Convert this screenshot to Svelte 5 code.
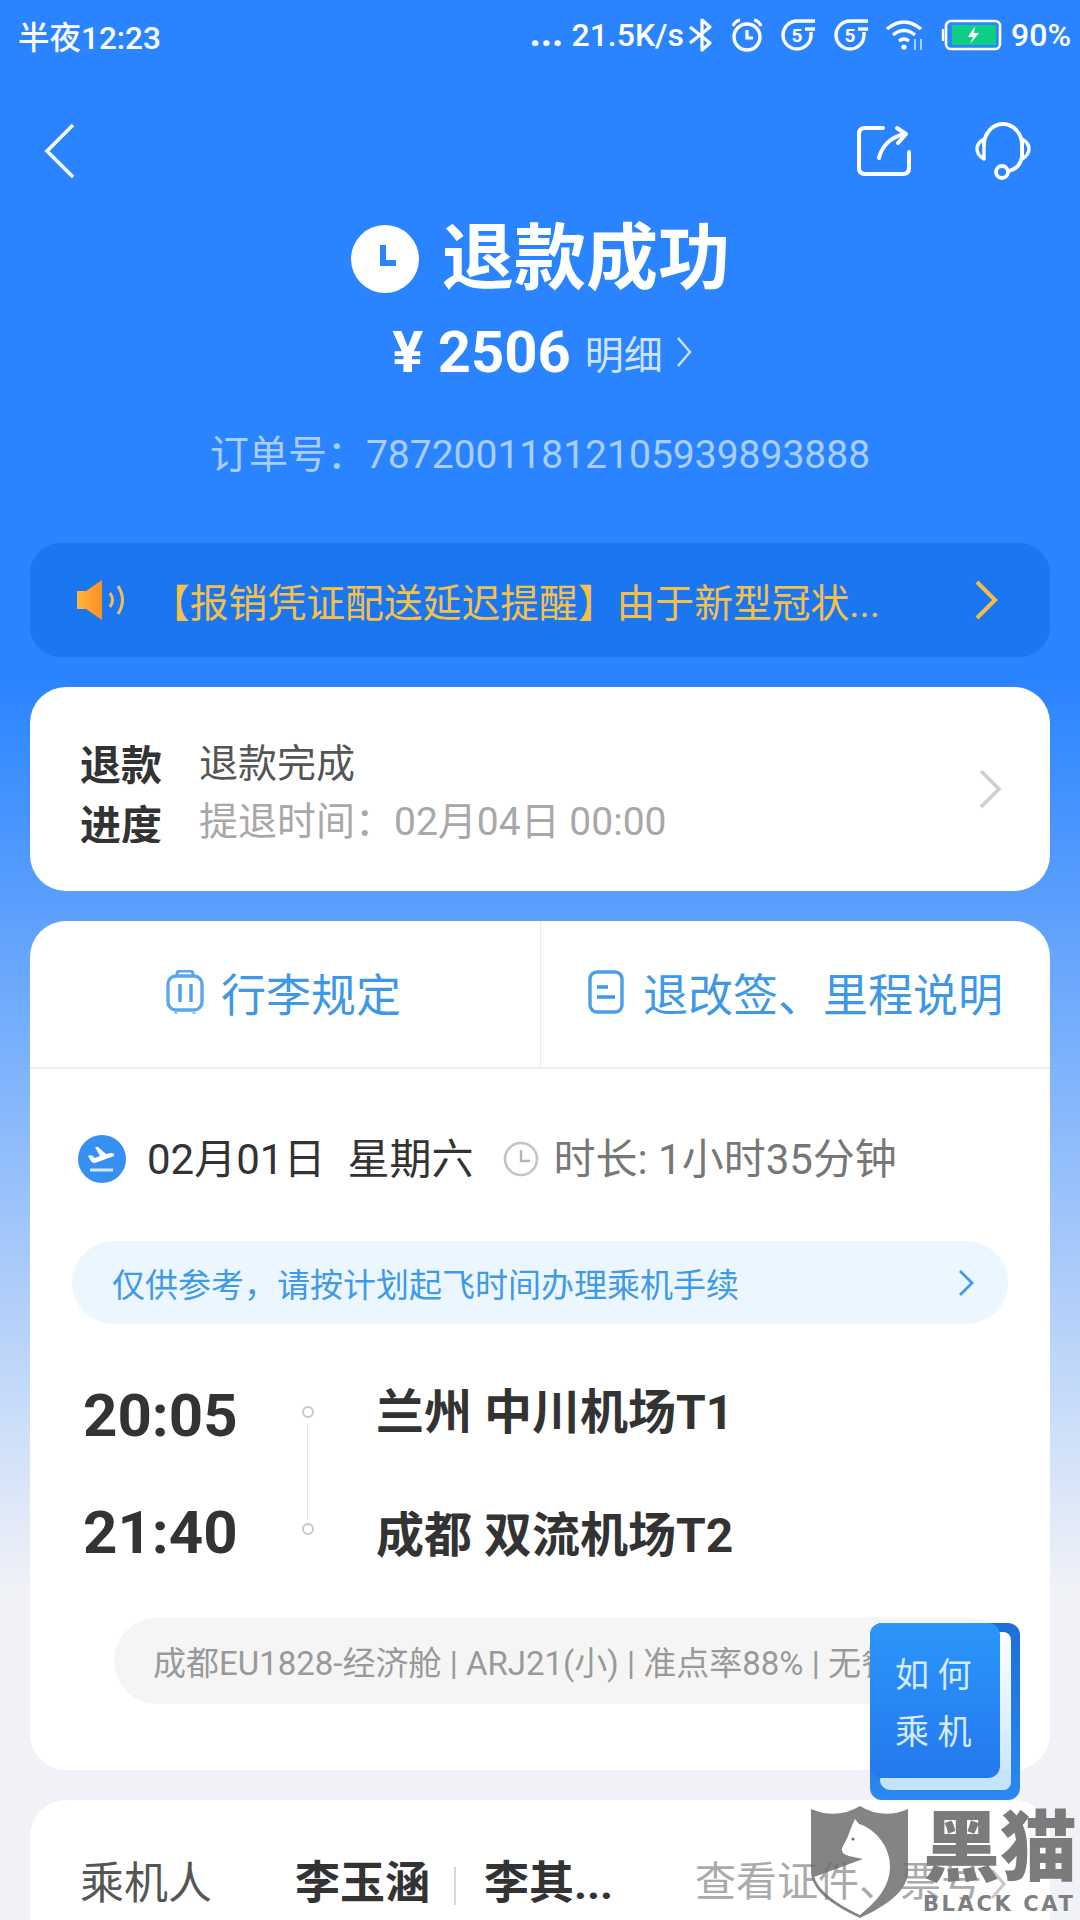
<script>
  const notice = '【报销凭证配送延迟提醒】由于新型冠状...';
</script>

<div class="page">
  <div class="status">
    <span class="clock">半夜12:23</span>
    <div class="sys">
      <span class="dots">...</span>
      <span class="speed">21.5K/s</span>
      <svg class="i-bt" viewBox="0 0 27 36" width="27" height="36"><path d="M2 10 L22 26 L14 33 V3 L22 10 L2 26" fill="none" stroke="#fff" stroke-width="3.2" stroke-linejoin="round"/></svg>
      <svg viewBox="0 0 34 36" width="34" height="36"><circle cx="17" cy="20" r="13" fill="none" stroke="#fff" stroke-width="3.4"/><path d="M17 13 V21 H23" fill="none" stroke="#fff" stroke-width="3.2"/><path d="M3 9 Q5 4 10 3 M31 9 Q29 4 24 3" fill="none" stroke="#fff" stroke-width="3"/></svg>
      <svg class="i-5" viewBox="0 0 38 34" width="38" height="34"><path d="M36 3 H18 A14 14 0 1 0 32 17 V14" fill="none" stroke="#fff" stroke-width="3.4"/><path d="M26 11 H36" stroke="#fff" stroke-width="3.4"/><text x="18" y="24" class="five">5</text></svg>
      <svg class="i-5" viewBox="0 0 38 34" width="38" height="34"><path d="M36 3 H18 A14 14 0 1 0 32 17 V14" fill="none" stroke="#fff" stroke-width="3.4"/><path d="M26 11 H36" stroke="#fff" stroke-width="3.4"/><text x="18" y="24" class="five">5</text></svg>
      <svg viewBox="0 0 40 32" width="40" height="32"><path d="M2 10 Q19 -4 36 10 M8 16 Q19 7 30 16 M14 22 Q19 18 24 22" fill="none" stroke="#fff" stroke-width="3.2"/><circle cx="19" cy="28" r="2.6" fill="#fff"/><path d="M30 20 V31 M36 20 V31" stroke="#a8ccff" stroke-width="2"/></svg>
      <svg class="i-bat" viewBox="0 0 62 32" width="62" height="32"><path d="M3 10 V22" stroke="#fff" stroke-width="2.4"/><rect x="6" y="2" width="54" height="28" rx="5" fill="none" stroke="#fff" stroke-width="2.6"/><path d="M12 6 H56 V26 H12 Z" fill="#0fcd84"/><path d="M35 7 L28 18 H33 L30 25 L39 14 H34 Z" fill="#fff"/></svg>
      <span class="pct">90%</span>
    </div>
  </div>

  <div class="nav">
    <svg viewBox="0 0 32 56" width="32" height="56"><path d="M29 2 L3 28 L29 54" fill="none" stroke="#fff" stroke-width="3.6"/></svg>
    <div class="nav-right">
      <svg viewBox="0 0 56 56" width="56" height="56"><path d="M27 5 H9 Q3 5 3 11 V45 Q3 51 9 51 H47 Q53 51 53 45 V29" fill="none" stroke="#fff" stroke-width="4" stroke-linecap="round"/><path d="M23 35 C26 22 36 13 50 11 M41 5 L50 11 L42 20" fill="none" stroke="#fff" stroke-width="4" stroke-linecap="round" stroke-linejoin="round"/></svg>
      <svg viewBox="0 0 58 60" width="58" height="60"><path d="M10 24 A19 21 0 0 1 48 24 V36 Q46 47 35 50" fill="none" stroke="#fff" stroke-width="3.8" stroke-linecap="round"/><path d="M10 18 Q3 22 3 28 Q3 34 10 38 Z M48 18 Q55 22 55 28 Q55 34 48 38 Z" fill="none" stroke="#fff" stroke-width="3.4" stroke-linejoin="round"/><circle cx="28" cy="51" r="6" fill="none" stroke="#fff" stroke-width="3.8"/></svg>
    </div>
  </div>

  <div class="title">
    <svg viewBox="0 0 70 70" width="70" height="70"><circle cx="35" cy="35" r="34" fill="#fff"/><path d="M33 21 V39 H46" fill="none" stroke="#2a84ff" stroke-width="6"/></svg>
    <h1>退款成功</h1>
  </div>
  <div class="amount">
    <b>¥ 2506</b><span>明细</span>
    <svg viewBox="0 0 16 32" width="16" height="32"><path d="M2 2 L14 16 L2 30" fill="none" stroke="#cfe3ff" stroke-width="2.4"/></svg>
  </div>
  <div class="order">订单号：78720011812105939893888</div>

  <div class="notice">
    <svg viewBox="0 0 50 40" width="50" height="40"><defs><linearGradient id="sp" x1="0" y1="0" x2="1" y2="0"><stop offset="0" stop-color="#ffb640"/><stop offset="1" stop-color="#ff8f1f"/></linearGradient></defs><path d="M0 11 H9 L25 0 V40 L9 29 H0 Z" fill="url(#sp)"/><path d="M33 13 Q38 20 33 27 M41 6 Q50 20 41 34" fill="none" stroke="#f3bf55" stroke-width="3"/></svg>
    <span class="ntext">{notice}</span>
    <svg viewBox="0 0 24 40" width="24" height="40"><path d="M3 2 L21 20 L3 38" fill="none" stroke="#f5bd4a" stroke-width="4"/></svg>
  </div>

  <div class="card progress">
    <div class="plabel">退款<br/>进度</div>
    <div class="pinfo">
      <div class="p1">退款完成</div>
      <div class="p2">提退时间：02月04日 00:00</div>
    </div>
    <svg viewBox="0 0 24 40" width="24" height="40"><path d="M3 2 L21 20 L3 38" fill="none" stroke="#cfcfcf" stroke-width="3.6"/></svg>
  </div>

  <div class="card flight">
    <div class="tabs">
      <div class="tab left">
        <svg viewBox="0 0 38 44" width="38" height="44"><path d="M11 6 V4 Q11 1 14 1 H24 Q27 1 27 4 V6" fill="none" stroke="#5aa7ee" stroke-width="3"/><rect x="2" y="6" width="34" height="34" rx="8" fill="none" stroke="#5aa7ee" stroke-width="3.4"/><path d="M14 14 V32 M25 14 V32" stroke="#4d9fea" stroke-width="3.4"/><path d="M10 41 V44 M28 41 V44" stroke="#8cc4f3" stroke-width="3"/></svg>
        <span>行李规定</span>
      </div>
      <div class="tab right">
        <svg viewBox="0 0 36 44" width="36" height="44"><rect x="2" y="2" width="32" height="40" rx="7" fill="none" stroke="#4d9fea" stroke-width="3.4"/><path d="M9 17 H20 M9 27 H27" stroke="#3f97e8" stroke-width="3.6"/></svg>
        <span>退改签、里程说明</span>
      </div>
    </div>

    <div class="date">
      <svg class="plane" viewBox="0 0 48 48" width="48" height="48"><circle cx="24" cy="24" r="24" fill="#3590f2"/><path d="M10 21 L13 20 L17 23 L22 21 L17 12 L20 12 L28 19 L33 18 Q37 18 36 21 L17 28 Q14 28 13 26 Z" fill="#fff"/><path d="M12 35 H35" stroke="#cfe6ff" stroke-width="3"/></svg>
      <span class="d1">02月01日</span>
      <span class="d2">星期六</span>
      <svg class="dclock" viewBox="0 0 36 36" width="36" height="36"><circle cx="18" cy="18" r="16" fill="none" stroke="#c4c4c4" stroke-width="2.6"/><path d="M18 9 V20 H27" fill="none" stroke="#b5b5b5" stroke-width="2.4"/></svg>
      <span class="d3">时长: 1小时35分钟</span>
    </div>

    <div class="tip">
      <span>仅供参考，请按计划起飞时间办理乘机手续</span>
      <svg viewBox="0 0 16 28" width="16" height="28"><path d="M2 2 L14 14 L2 26" fill="none" stroke="#3f9ae8" stroke-width="2.8"/></svg>
    </div>

    <div class="route">
      <div class="leg">
        <span class="time">20:05</span>
        <i class="node"></i>
        <span class="place">兰州 中川机场T1</span>
      </div>
      <div class="leg second">
        <span class="time">21:40</span>
        <i class="node"></i>
        <span class="place">成都 双流机场T2</span>
      </div>
    </div>

    <div class="fl-info"><span>成都EU1828-经济舱 | ARJ21(小) | 准点率88% | 无餐食</span></div>
  </div>

  <div class="card pax">
    <span class="pl">乘机人</span>
    <span class="pn">李玉涵</span>
    <i class="sep"></i>
    <span class="pn second">李其...</span>
    <span class="pv">查看证件、票号</span>
    <svg viewBox="0 0 16 32" width="16" height="32"><path d="M2 2 L14 16 L2 30" fill="none" stroke="#c8c8c8" stroke-width="3"/></svg>
  </div>

  <div class="book">
    <div class="book-page"></div>
    <div class="book-front">如 何<br/>乘 机</div>
  </div>

  <div class="mark">
    <svg viewBox="0 0 97 113" width="97" height="113"><path fill-rule="evenodd" d="M0 3 Q26 14 49 0 Q72 14 97 3 V66 C96 88 70 102 49 112 C28 102 1 88 0 66 Z M44 13 L48 18 C65 23 80 42 79 62 C78 82 65 96 49 109 C35 102 10 90 3 71 L52 53 L38 50 Q29 47 31 42 Q37 32 40 22 Z" fill="#6f6f6f" fill-opacity=".85"/><circle cx="42" cy="33" r="1.6" fill="#6f6f6f"/></svg>
    <div class="mark-t">
      <b>黑猫</b>
      <em>BLACK CAT</em>
    </div>
  </div>
</div>

<style>
  :global(body) { margin: 0; }
  .page {
    position: relative;
    width: 1080px;
    height: 1920px;
    overflow: hidden;
    display: flex;
    flex-direction: column;
    background: linear-gradient(180deg, #2a84ff 0, #2a84ff 680px, #f0f2f7 1590px);
    font-family: Roboto, "Noto Sans CJK SC", sans-serif;
    color: #333;
  }
  .status {
    height: 70px;
    padding: 0 9px 0 18px;
    display: flex;
    align-items: center;
    justify-content: space-between;
    color: #fff;
    font-size: 32px;
    font-weight: 500;
    flex: none;
  }
  .clock { font-size: 31.5px; }
  .sys { display: flex; align-items: center; }
  .dots { font-weight: 700; font-size: 39px; line-height: 1; margin-top: -4px; margin-right: 8px; }
  .speed { margin-right: 4px; }
  .sys svg { margin-left: 15px; }
  .sys .i-bt { margin-left: 0; }
  .five { font: 700 19px Roboto, sans-serif; fill: #fff; text-anchor: middle; }
  .pct { margin-left: 9px; }
  .nav {
    height: 56px;
    margin-top: 53px;
    padding: 0 48px 0 44px;
    display: flex;
    align-items: center;
    justify-content: space-between;
    flex: none;
  }
  .nav-right { display: flex; align-items: center; gap: 62px; }
  .title {
    margin-top: 38px;
    height: 84px;
    display: flex;
    align-items: center;
    justify-content: center;
    gap: 22px;
    flex: none;
  }
  .title h1 { margin: 0; color: #fff; font-size: 72px; font-weight: 700; line-height: 84px; }
  .amount {
    margin-top: 21px;
    height: 60px;
    padding-left: 4px;
    display: flex;
    align-items: center;
    justify-content: center;
    color: #fff;
    flex: none;
  }
  .amount b { font-size: 58px; font-weight: 700; }
  .amount span { margin-left: 14px; font-size: 39px; color: #cfe3ff; }
  .amount svg { margin-left: 13px; }
  .order {
    margin-top: 48px;
    height: 50px;
    line-height: 50px;
    text-align: center;
    color: rgba(255, 255, 255, .62);
    font-size: 39px;
    flex: none;
  }
  .notice {
    margin: 63px 30px 0;
    height: 114px;
    padding: 0 52px 0 47px;
    border-radius: 30px;
    background: #1b76f2;
    display: flex;
    align-items: center;
    flex: none;
  }
  .ntext { flex: 1; margin-left: 24px; color: #f5c04a; font-size: 38.8px; white-space: nowrap; }
  .card { background: #fff; border-radius: 36px; margin: 0 30px; flex: none; }
  .progress {
    margin-top: 30px;
    height: 204px;
    display: flex;
    align-items: center;
    padding: 0 48px 0 50px;
    box-sizing: border-box;
  }
  .plabel {
    width: 119px;
    font-size: 41px;
    font-weight: 700;
    line-height: 60px;
    height: 107px;
    overflow: hidden;
    color: #333;
  }
  .pinfo { flex: 1; font-size: 39px; line-height: 58px; margin-top: 8px; }
  .p1 { color: #555; }
  .p2 { color: #a8a8a8; }
  .flight { margin-top: 30px; height: 849px; display: flex; flex-direction: column; }
  .tabs { height: 146px; display: flex; border-bottom: 2px solid #eceff2; flex: none; }
  .tab { display: flex; align-items: center; color: #3f97e8; font-size: 45px; padding-bottom: 4px; box-sizing: border-box; }
  .tab.left { width: 511px; border-right: 1px solid #e8ebee; justify-content: center; gap: 17px; padding-right: 3px; }
  .tab.right { flex: 1; padding-left: 47px; gap: 19px; }
  .date { margin-top: 62px; height: 48px; display: flex; align-items: center; padding-left: 48px; font-size: 42px; flex: none; }
  .plane, .dclock { margin-top: 7px; }
  .d1 { margin-left: 21px; color: #333; }
  .d2 { margin-left: 22px; color: #333; }
  .dclock { margin-left: 30px; }
  .d3 { margin-left: 14px; color: #777; }
  .tip {
    margin: 62px 42px 0;
    height: 83px;
    border-radius: 42px;
    background: #ecf6fe;
    display: flex;
    align-items: center;
    justify-content: space-between;
    padding: 0 34px 0 40px;
    color: #3f9ae8;
    font-size: 33px;
    flex: none;
  }
  .route { margin-top: 62px; padding-left: 53px; position: relative; flex: none; }
  .leg { display: flex; align-items: center; height: 60px; position: relative; }
  .leg.second { margin-top: 57px; }
  .time { width: 194px; font-size: 60px; font-weight: 700; color: #333; line-height: 60px; }
  .node { width: 8px; height: 8px; border: 2px solid #c8c8c8; border-radius: 50%; margin: 0 62px 9px 25px; }
  .leg:first-child::after { content: ""; position: absolute; left: 224px; top: 37px; width: 1px; height: 96px; background: #e2e2e2; }
  .place { font-size: 48px; font-weight: 700; color: #333; margin-bottom: 17px; white-space: nowrap; }
  .second .place { margin-bottom: 4px; }
  .fl-info {
    margin: 55px 0 0 84px;
    width: 900px;
    height: 86px;
    border-radius: 43px;
    background: #f5f5f6;
    display: flex;
    align-items: center;
    padding-left: 39px;
    box-sizing: border-box;
    color: #999;
    font-size: 33px;
    white-space: nowrap;
    overflow: hidden;
    flex: none;
  }
  .pax {
    margin-top: 30px;
    height: 200px;
    padding: 54px 44px 0 50px;
    display: flex;
    align-items: flex-start;
    box-sizing: border-box;
  }
  .pl { width: 215px; font-size: 44px; color: #555; line-height: 60px; }
  .pn { font-size: 45px; font-weight: 700; color: #333; line-height: 60px; }
  .sep { width: 2px; height: 38px; background: #d8d8d8; margin: 13px 28px 0 24px; }
  .pv { margin-left: auto; font-size: 41px; color: #aaa; line-height: 56px; }
  .pax svg { margin: 14px 0 0 8px; }
  .book {
    position: absolute;
    left: 870px;
    top: 1623px;
    width: 150px;
    height: 177px;
    border-radius: 12px;
    background: linear-gradient(180deg, #1d6fd8, #2a88ee);
  }
  .book-page {
    position: absolute;
    right: 9px;
    top: 9px;
    width: 40px;
    height: 158px;
    border-radius: 0 8px 8px 8px;
    background: linear-gradient(180deg, #ffffff, #c4e4fb);
  }
  .book-page::after {
    content: "";
    position: absolute;
    right: 0;
    bottom: 0;
    width: 131px;
    height: 20px;
    border-radius: 10px 8px 8px 10px;
    background: #c4e4fb;
  }
  .book-front {
    position: absolute;
    left: 0;
    top: 0;
    width: 130px;
    height: 155px;
    border-radius: 12px;
    background: linear-gradient(180deg, #2b96fb, #2478ee);
    color: #d7ebff;
    font-size: 34px;
    line-height: 57px;
    padding: 24px 0 0 25px;
    box-sizing: border-box;
    white-space: nowrap;
  }
  .mark { position: absolute; left: 811px; top: 1806px; display: flex; }
  .mark-t { margin-left: 15px; display: flex; flex-direction: column; width: 154px; }
  .mark-t b { font-size: 77px; line-height: 78px; font-weight: 900; color: #7b7b7b; margin-top: 4px; white-space: nowrap; }
  .mark-t em { font-style: normal; font-size: 21px; line-height: 24px; font-weight: 700; color: #7f7f7f; letter-spacing: 2.6px; font-family: "DejaVu Sans", sans-serif; white-space: nowrap; margin-top: 4px; }
</style>
